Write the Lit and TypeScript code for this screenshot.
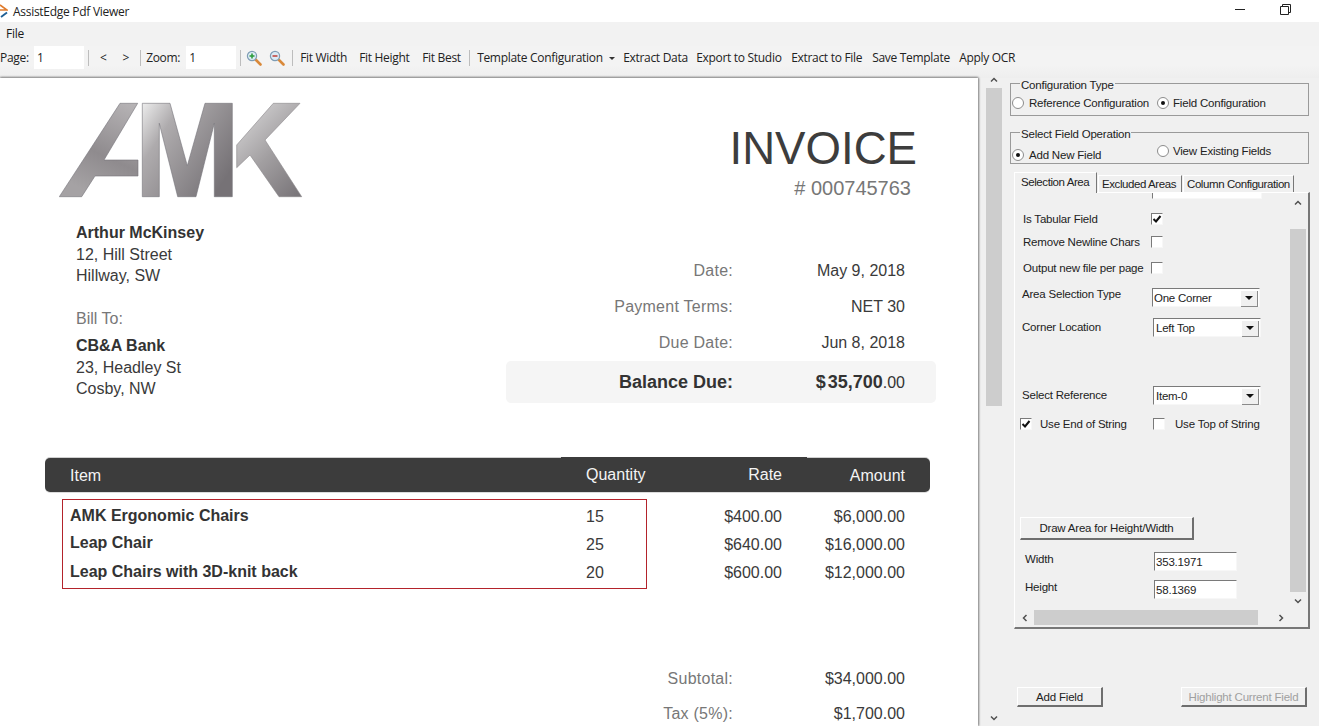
import { LitElement, html, css, svg } from "lit";
import { customElement } from "lit/decorators.js";

const fitTools = [
  { label: "Fit Width", width: 59 },
  { label: "Fit Height", width: 63 },
  { label: "Fit Best", width: 47 },
];

const dataTools = [
  { label: "Extract Data", width: 73 },
  { label: "Export to Studio", width: 95 },
  { label: "Extract to File", width: 81 },
  { label: "Save Template", width: 87 },
  { label: "Apply OCR", width: 60 },
];

const lines = [
  { name: "AMK Ergonomic Chairs", qty: "15", rate: "400.00", amount: "6,000.00", cls: "l1" },
  { name: "Leap Chair", qty: "25", rate: "640.00", amount: "16,000.00", cls: "l2" },
  { name: "Leap Chairs with 3D-knit back", qty: "20", rate: "600.00", amount: "12,000.00", cls: "l3" },
];

const magnifier = (minus: boolean) => svg`
  <svg class="mag" viewBox="0 0 16 16" width="16" height="16">
    <path d="M9.5 9.5 L14.5 14.5" stroke="#d9893a" stroke-width="2.6" stroke-linecap="round"/>
    <circle cx="6" cy="6" r="4.6" fill="#dcebf5" stroke="#7f9db5" stroke-width="1.2"/>
    <path d="M3.5 6 H8.5" stroke="${minus ? "#c2473f" : "#2f9e3f"}" stroke-width="1.6"/>
    ${minus ? "" : svg`<path d="M6 3.5 V8.5" stroke="#2f9e3f" stroke-width="1.6"/>`}
  </svg>`;

const arrow = (d: string) => html`<svg class="arr" viewBox="0 0 8 8" width="8" height="8"><path d="${d}" fill="none" stroke="#505050" stroke-width="1.5"/></svg>`;
const UP = "M1 5.5 L4 2.5 L7 5.5";
const DOWN = "M1 2.5 L4 5.5 L7 2.5";
const LEFT = "M5.5 1 L2.5 4 L5.5 7";
const RIGHT = "M2.5 1 L5.5 4 L2.5 7";

@customElement("app-root")
export class AppRoot extends LitElement {
  static override styles = css`
    :host {
      display: block;
      width: 1319px;
      height: 726px;
      overflow: hidden;
      background: #f0f0f0;
      font-family: "Liberation Sans", Arial, sans-serif;
      color: #1a1a1a;
    }

    /* window chrome */
    .title {
      height: 22px;
      background: #fff;
      display: flex;
      align-items: center;
      font: 12px "Open Sans", sans-serif;
      letter-spacing: -0.28px;
      color: #222;
    }
    .title svg.logo { margin-right: 5px; }
    .title .grow { flex: 1; }
    .min { width: 10px; height: 1px; background: #222; margin: 0 35px 3px 0; }
    .restore { margin: 0 28px 4px 0; }

    .menu {
      height: 24px;
      box-sizing: border-box;
      padding: 0 0 2px 6px;
      background: #f2f2f2;
      display: flex;
      align-items: center;
      font: 12px "Open Sans", sans-serif;
      letter-spacing: -0.28px;
    }

    .toolbar {
      height: 32px;
      box-sizing: border-box;
      padding-bottom: 9px;
      background: linear-gradient(#f3f3f3, #f3f3f3 60%, #eeeeee);
      display: flex;
      align-items: center;
      font: 12px "Open Sans", sans-serif;
      letter-spacing: -0.3px;
      white-space: nowrap;
      color: #222;
    }
    .toolbar input {
      width: 50px;
      height: 23px;
      box-sizing: border-box;
      border: 0;
      padding: 0 0 0 3px;
      background: #fff;
      font: inherit;
      color: inherit;
    }
    .page-lab { width: 34px; }
    .zoom-lab { width: 40px; }
    .sep { width: 1px; height: 16px; background: #bdbdbd; margin: 0 5px 0 4px; flex: none; }
    .sep.after-mag { margin: 0 7px; }
    .sep.after-fit { margin: 0 7px 0 0; }
    .prev { margin: 0 16px 0 6px; }
    .next { margin-right: 7px; }
    .mag { flex: none; }
    .mag + .mag { margin-left: 7px; }
    .tool { flex: none; }
    .tmpl { width: 132px; flex: none; }
    .drop { width: 0; height: 0; border: 3px solid transparent; border-top-color: #333; border-bottom: 0; margin: 1px 8px 0 0; }

    .main { display: flex; height: 648px; }

    /* pdf page */
    .doc {
      width: 978px;
      flex: none;
      height: 100%;
      background: #fff;
      box-shadow: 1px 0 2px #8a8a8a, 0 -1px 2px #8a8a8a;
      position: relative;
      overflow: hidden;
      color: #3a3a3a;
      font-size: 16px;
      line-height: 21px;
    }
    .head { display: flex; justify-content: space-between; height: 134px; }
    .head svg { margin: 24px 0 0 59px; }
    .inv { text-align: right; margin: 44px 62px 0 0; }
    .inv h1 { margin: 0 -1px 0 0; font-size: 45.6px; line-height: 54px; font-weight: 400; color: #3d3d3d; }
    .inv p { margin: 0 5px 0 0; font-size: 20px; line-height: 24px; color: #777; }

    .info { display: flex; justify-content: space-between; height: 246px; }
    .addr { margin: 10px 0 0 76px; }
    .addr b { display: block; color: #333; margin-bottom: 1px; }
    .addr .bill { color: #777; margin: 22px 0 6px; }
    .addr div { height: 21px; }
    .meta { width: 430px; margin: 48px 42px 0 0; }
    .meta .r { display: grid; grid-template-columns: 227px 172px; height: 36px; color: #3a3a3a; }
    .meta .r span:first-child { text-align: right; color: #777; letter-spacing: 0.25px; }
    .meta .r span:last-child { text-align: right; }
    .due {
      display: grid;
      grid-template-columns: 227px 172px;
      height: 42px;
      align-items: center;
      background: #f5f5f5;
      border-radius: 5px;
      margin-top: -7px;
      font-size: 18px;
      font-weight: 700;
      color: #333;
      text-align: right;
    }
    .due small { font-size: 16px; font-weight: 400; }
    .due .cur { margin-right: 2px; }

    .thead {
      margin-left: 45px;
      width: 885px;
      height: 34px;
      display: grid;
      grid-template-columns: 516px 246px 123px;
      grid-template-rows: 34px;
      align-items: center;
      background: #3c3c3c;
      border-radius: 5px;
      box-shadow: 0 -1px 0 #cfcfcf, 0 1px 0 #dcdcdc;
      color: #f4f4f4;
    }
    .thead > div { padding: 0 25px; }
    .thead .mid {
      display: flex;
      justify-content: space-between;
      height: 35px;
      align-self: end;
      align-items: center;
      background: #3c3c3c;
    }
    .thead .end { text-align: right; }

    .tbody { margin: 10px 0 0 70px; width: 835px; }
    .line { display: grid; grid-template-columns: 516px 101px 95px 123px; height: 28px; align-items: center; }
    .line b { color: #333; position: relative; top: -1px; }
    .line .num { text-align: right; }
    .line.l2 b { top: -2px; }
    .sel {
      position: absolute;
      left: 62px;
      top: 421px;
      width: 583px;
      height: 88px;
      border: 1px solid #b3232b;
    }

    .totals { margin: 82px 0 0 0; }
    .totals .r { display: grid; grid-template-columns: 733px 172px; height: 35px; text-align: right; }
    .totals .r span:first-child { color: #777; letter-spacing: 0.25px; }

    /* outer scrollbar */
    .vbar {
      width: 16px;
      flex: none;
      margin-left: 8px;
      display: flex;
      flex-direction: column;
      align-items: center;
    }
    .vbar .top { height: 10px; }
    .vbar .top .arr { display: block; margin-top: -2px; }
    .vbar .thumb { width: 16px; height: 318px; background: #cdcdcd; }
    .vbar .grow { flex: 1; }
    .vbar .down { height: 16px; display: flex; align-items: center; }

    /* right hand panel */
    .panel {
      flex: 1;
      font-size: 11.5px;
      color: #222;
      padding-left: 8px;
      letter-spacing: -0.2px;
      white-space: nowrap;
    }
    fieldset {
      box-sizing: border-box;
      width: 299px;
      margin: 0;
      padding: 0;
      border: 1px solid #9a9a9a;
    }
    .g1 { height: 39px; margin-top: -1px; }
    .g2 { height: 38px; margin-top: 10px; }
    legend { margin-left: 9px; padding: 0 1px; line-height: 12px; position: relative; top: 2px; }
    .opts { display: flex; align-items: center; }
    .g1 .opts { margin-top: 8px; }
    .g2 .opts { margin-top: 11px; }
    .radio {
      width: 12px;
      height: 12px;
      box-sizing: border-box;
      border-radius: 50%;
      border: 1px solid #8c8c8c;
      background: #fff;
      margin-left: 1px;
      margin-right: 4px;
      flex: none;
      display: flex;
      align-items: center;
      justify-content: center;
    }
    .opt:first-child .radio { margin-right: 5px; }
    .radio.on::after { content: ""; width: 4px; height: 4px; border-radius: 50%; background: #111; }
    .opt { display: flex; align-items: center; width: 145px; }
    .lift { position: relative; top: -4px; }

    .tabs { display: flex; align-items: flex-end; margin: 8px 0 0 4px; height: 20px; }
    .tab {
      box-sizing: border-box;
      height: 17px;
      border-left: 1px solid #fff;
      border-top: 1px solid #fff;
      border-right: 1px solid #777;
      padding: 1px 0 0 3px;
      margin-right: 1px;
      line-height: 15px;
      letter-spacing: -0.42px;
      flex: none;
    }
    .t-sel {
      width: 83px;
      height: 21px;
      padding: 2px 0 0 6px;
      position: relative;
      top: 1px;
      z-index: 1;
      background: #f0f0f0;
    }
    .t-exc { width: 84px; }
    .t-col { width: 111px; }

    .page {
      box-sizing: border-box;
      width: 296px;
      height: 437px;
      margin-left: 4px;
      border-top: 1px solid #fff;
      border-left: 1px solid #fff;
      border-right: 2px solid #777;
      border-bottom: 2px solid #777;
      display: grid;
      grid-template-columns: 275px 16px;
      grid-template-rows: 417px 15px;
    }
    .inner { overflow: hidden; }
    .bar-v { display: flex; flex-direction: column; align-items: center; }
    .bar-v .track { height: 363px; width: 16px; background: #cdcdcd; }
    .bar-v .a { height: 36px; display: block; padding-top: 6px; box-sizing: border-box; }
    .bar-v .a.b { height: 17px; padding-top: 5px; }
    .bar-v .arr { display: block; }
    .bar-h { grid-column: 1 / 3; display: flex; align-items: center; }
    .bar-h .a { width: 19px; display: flex; justify-content: center; }
    .bar-h .track { width: 224px; height: 15px; background: #cdcdcd; }
    .bar-h .end { width: 46px; display: flex; justify-content: center; }

    .row { display: flex; align-items: center; }
    .row .lab { width: 129px; margin-left: 8px; flex: none; }
    .row .lab.left { width: 130px; margin-left: 7px; margin-top: -2px; }
    .row .lab.dim-lab { width: 127px; margin-left: 10px; margin-top: -5px; }
    .row .lab.high { margin-top: -7px; }
    .field {
      box-sizing: border-box;
      background: #fff;
      border: 1px solid #f7f7f7;
      border-top-color: #7a7a7a;
      border-left-color: #7a7a7a;
      display: flex;
      align-items: center;
      padding-left: 1px;
      height: 19px;
    }
    .clip { width: 110px; height: 6px; margin: 0 0 0 137px; border-top: 0; }
    .check {
      width: 12px;
      height: 12px;
      box-sizing: border-box;
      border: 1px solid #7a7a7a;
      border-right-color: #f7f7f7;
      border-bottom-color: #f7f7f7;
      background: #fff;
      flex: none;
    }
    .check svg { display: block; }
    .opt-row .check { margin-left: -1px; }
    .r-tab { height: 16px; margin-top: 12px; }
    .r-rem { height: 16px; margin-top: 7px; }
    .r-out { height: 16px; margin-top: 10px; }
    .r-area { height: 19px; margin-top: 12px; }
    .r-corner { height: 19px; margin-top: 11px; }
    .r-ref { height: 19px; margin-top: 49px; }
    .r-use { height: 16px; margin-top: 11px; padding-left: 5px; }
    .r-use .check { margin-right: 8px; }
    .r-use .u1 { width: 113px; }
    .r-use .check.second { margin-right: 10px; }
    .r-draw { margin: 85px 0 0 5px; }
    .r-w { height: 19px; margin-top: 12px; }
    .r-h { height: 19px; margin-top: 9px; }
    .combo { width: 108px; justify-content: space-between; padding-right: 1px; letter-spacing: -0.25px; }
    .combo.shift { margin-left: 1px; padding-left: 2px; }
    .combo i {
      width: 16px;
      height: 15px;
      background: #f0f0f0;
      border-left: 1px solid #fff;
      border-top: 1px solid #fff;
      box-shadow: 1px 1px 0 #8a8a8a;
      display: flex;
      align-items: center;
      justify-content: center;
      margin-right: 1px;
    }
    .combo i::after { content: ""; border: 4px solid transparent; border-top-color: #111; border-bottom: 0; }
    .dim { width: 83px; margin-left: 2px; }
    button {
      box-sizing: border-box;
      height: 23px;
      background: #f0f0f0;
      border: 1px solid #fff;
      border-right: 2px solid #6e6e6e;
      border-bottom: 2px solid #6e6e6e;
      font: inherit;
      letter-spacing: inherit;
      color: #222;
      padding: 0;
      display: block;
    }
    .draw { width: 174px; }
    .actions { display: flex; justify-content: space-between; margin: 58px 2px 0 7px; width: 290px; }
    .add { width: 86px; height: 20px; }
    .hl { width: 126px; height: 20px; color: #a0a0a0; }
  `;

  private _check(on = false, cls = "") {
    return html`<span class="check ${cls}">${on
      ? html`<svg viewBox="0 0 10 10" width="10" height="10"><path d="M1.5 5 L4 7.5 L8.5 2" fill="none" stroke="#111" stroke-width="2"/></svg>`
      : ""}</span>`;
  }

  private _combo(text: string, cls = "") {
    return html`<span class="field combo ${cls}"><span>${text}</span><i></i></span>`;
  }

  private _logo() {
    return html`<svg width="244" height="96" viewBox="59 102 244 96">
      <defs>
        <linearGradient id="ga" x1="0.9" y1="0" x2="0.5" y2="1"><stop offset="0" stop-color="#b6b3b5"/><stop offset="0.6" stop-color="#8f8b8e"/><stop offset="1" stop-color="#a5a2a4"/></linearGradient>
        <linearGradient id="gm" x1="0" y1="0" x2="1" y2="0.7"><stop offset="0" stop-color="#ececec"/><stop offset="0.3" stop-color="#aeabad"/><stop offset="1" stop-color="#767276"/></linearGradient>
        <linearGradient id="gk" x1="0.2" y1="0" x2="0.9" y2="1"><stop offset="0" stop-color="#d4d3d4"/><stop offset="0.5" stop-color="#a3a0a2"/><stop offset="1" stop-color="#7a767a"/></linearGradient>
      </defs>
      <path fill="url(#ga)" stroke="#76737a" stroke-width=".6" d="M59.3 196.7 L120 103.3 H137.7 L104 160 H138 V176 H95 L81.7 196.7 Z"/>
      <path fill="url(#gm)" stroke="#76737a" stroke-width=".6" d="M142.3 103.3 H170 L187.3 165.7 L205 103.3 H232.3 V196.7 H214.3 V123.3 L196 196.7 H177.7 L159.3 123.3 V196.7 H142.3 Z"/>
      <path fill="url(#gk)" stroke="#8a878a" stroke-width=".6" d="M273.3 103.3 H300 L265 140 L301.7 196.7 H279 L250 155 L236.7 167.7 V145 Z"/>
    </svg>`;
  }

  private _doc() {
    return html`<section class="doc">
      <div class="head">
        ${this._logo()}
        <div class="inv"><h1>INVOICE</h1><p># 000745763</p></div>
      </div>
      <div class="info">
        <div class="addr">
          <b>Arthur McKinsey</b>
          <div>12, Hill Street</div>
          <div>Hillway, SW</div>
          <div class="bill">Bill To:</div>
          <b>CB&amp;A Bank</b>
          <div>23, Headley St</div>
          <div>Cosby, NW</div>
        </div>
        <div class="meta">
          <div class="r"><span>Date:</span><span>May 9, 2018</span></div>
          <div class="r"><span>Payment Terms:</span><span>NET 30</span></div>
          <div class="r"><span>Due Date:</span><span>Jun 8, 2018</span></div>
          <div class="due"><span>Balance Due:</span><span><span class="cur">$</span>35,700<small>.00</small></span></div>
        </div>
      </div>
      <div class="thead">
        <div>Item</div>
        <div class="mid"><span>Quantity</span><span>Rate</span></div>
        <div class="end">Amount</div>
      </div>
      <div class="tbody">
        ${lines.map(
          (l) => html`<div class="line ${l.cls}">
            <b>${l.name}</b><span>${l.qty}</span>
            <span class="num">$${l.rate}</span>
            <span class="num">$${l.amount}</span>
          </div>`,
        )}
      </div>
      <div class="sel"></div>
      <div class="totals">
        <div class="r"><span>Subtotal:</span><span>$34,000.00</span></div>
        <div class="r"><span>Tax (5%):</span><span>$1,700.00</span></div>
      </div>
    </section>`;
  }

  private _panel() {
    return html`<section class="panel">
      <fieldset class="g1">
        <legend>Configuration Type</legend>
        <div class="opts">
          <span class="opt"><span class="radio"></span>Reference Configuration</span>
          <span class="opt"><span class="radio on"></span>Field Configuration</span>
        </div>
      </fieldset>
      <fieldset class="g2">
        <legend>Select Field Operation</legend>
        <div class="opts">
          <span class="opt"><span class="radio on"></span>Add New Field</span>
          <span class="opt lift"><span class="radio"></span>View Existing Fields</span>
        </div>
      </fieldset>
      <div class="tabs">
        <span class="tab t-sel">Selection Area</span>
        <span class="tab t-exc">Excluded Areas</span>
        <span class="tab t-col">Column Configuration</span>
      </div>
      <div class="page">
        <div class="inner">
          <div class="field clip"></div>
          <div class="row opt-row r-tab"><span class="lab">Is Tabular Field</span>${this._check(true)}</div>
          <div class="row opt-row r-rem"><span class="lab">Remove Newline Chars</span>${this._check()}</div>
          <div class="row opt-row r-out"><span class="lab">Output new file per page</span>${this._check()}</div>
          <div class="row r-area"><span class="lab left high">Area Selection Type</span>${this._combo("One Corner")}</div>
          <div class="row r-corner"><span class="lab left">Corner Location</span>${this._combo("Left Top", "shift")}</div>
          <div class="row r-ref"><span class="lab left">Select Reference</span>${this._combo("Item-0", "shift")}</div>
          <div class="row r-use">
            ${this._check(true)}<span class="u1">Use End of String</span>
            ${this._check(false, "second")}<span>Use Top of String</span>
          </div>
          <div class="r-draw"><button class="draw">Draw Area for Height/Width</button></div>
          <div class="row r-w"><span class="lab dim-lab">Width</span><span class="field dim">353.1971</span></div>
          <div class="row r-h"><span class="lab dim-lab">Height</span><span class="field dim">58.1369</span></div>
        </div>
        <div class="bar-v">
          <span class="a">${arrow(UP)}</span>
          <span class="track"></span>
          <span class="a b">${arrow(DOWN)}</span>
        </div>
        <div class="bar-h">
          <span class="a">${arrow(LEFT)}</span>
          <span class="track"></span>
          <span class="end">${arrow(RIGHT)}</span>
        </div>
      </div>
      <div class="actions">
        <button class="add">Add Field</button>
        <button class="hl">Highlight Current Field</button>
      </div>
    </section>`;
  }

  override render() {
    return html`
      <div class="title">
        <svg class="logo" width="8" height="14" viewBox="0 0 8 14">
          <path d="M0 1 L7 6 H0" fill="none" stroke="#e07b2c" stroke-width="1.6"/>
          <path d="M1 13 L7 8.5" fill="none" stroke="#1f5f94" stroke-width="1.8"/>
        </svg>
        AssistEdge Pdf Viewer
        <span class="grow"></span>
        <span class="min"></span>
        <svg class="restore" width="11" height="11" viewBox="0 0 11 11">
          <path d="M.5 2.5 H8.5 V10.5 H.5 Z M2.5 2.5 V.5 H10.5 V8.5 H8.5" fill="none" stroke="#222"/>
        </svg>
      </div>
      <div class="menu">File</div>
      <div class="toolbar">
        <span class="page-lab">Page:</span><input .value="${"1"}" />
        <span class="sep"></span>
        <span class="prev">&lt;</span><span class="next">&gt;</span>
        <span class="sep"></span>
        <span class="zoom-lab">Zoom:</span><input .value="${"1"}" />
        <span class="sep"></span>
        ${magnifier(false)}${magnifier(true)}
        <span class="sep after-mag"></span>
        ${fitTools.map((t) => html`<span class="tool" style="width:${t.width}px">${t.label}</span>`)}
        <span class="sep after-fit"></span>
        <span class="tmpl">Template Configuration</span><span class="drop"></span>
        ${dataTools.map((t) => html`<span class="tool" style="width:${t.width}px">${t.label}</span>`)}
      </div>
      <div class="main">
        ${this._doc()}
        <div class="vbar">
          <span class="top">${arrow(UP)}</span>
          <span class="thumb"></span>
          <span class="grow"></span>
          <span class="down">${arrow(DOWN)}</span>
        </div>
        ${this._panel()}
      </div>
    `;
  }
}
